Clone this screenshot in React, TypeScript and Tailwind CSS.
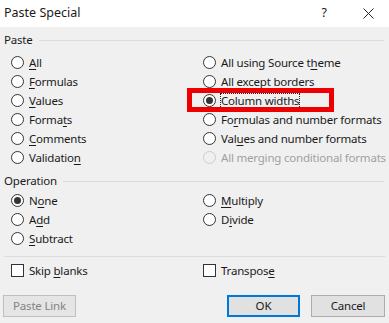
import React from "react";

const font = { fontFamily: '"Noto Sans", "Open Sans", sans-serif' };

function U({ t, i }: { t: string; i: number }) {
  if (i < 0) return <>{t}</>;
  return (
    <>
      {t.slice(0, i)}
      <span className="underline underline-offset-2">{t[i]}</span>
      {t.slice(i + 1)}
    </>
  );
}

function Radio({
  label,
  u,
  checked = false,
  disabled = false,
  focus = false,
}: {
  label: string;
  u: number;
  checked?: boolean;
  disabled?: boolean;
  focus?: boolean;
}) {
  return (
    <div className="flex h-[19px] items-center">
      <span
        className={`flex h-[13px] w-[13px] shrink-0 items-center justify-center rounded-full border ${
          disabled ? "border-[#cccccc] bg-[#f0f0f0]" : "border-[#333333] bg-white"
        }`}
      >
        {checked && <span className="h-[7px] w-[7px] rounded-full bg-[#333333]" />}
      </span>
      <span
        className={`ml-[5px] whitespace-nowrap text-[11.5px] leading-[14px] tracking-[-0.2px] ${
          disabled ? "text-[#a0a0a0]" : "text-[#1a1a1a]"
        } ${focus ? "outline outline-1 outline-dotted outline-[#222]" : ""}`}
      >
        <U t={label} i={u} />
      </span>
    </div>
  );
}

function Check({ label, u }: { label: string; u: number }) {
  return (
    <div className="flex h-[19px] items-center">
      <span className="h-[13px] w-[13px] shrink-0 border border-[#333333] bg-white" />
      <span className="ml-[5px] whitespace-nowrap text-[11.5px] leading-[14px] tracking-[-0.2px] text-[#1a1a1a]">
        <U t={label} i={u} />
      </span>
    </div>
  );
}

function GroupLabel({ text }: { text: string }) {
  return (
    <div className="flex h-[16px] items-center pl-[4px] pr-[5px]">
      <span className="whitespace-nowrap text-[11.5px] leading-[14px] tracking-[-0.2px] text-[#1a1a1a]">{text}</span>
      <span className="ml-[6px] h-px flex-1 bg-[#dcdcdc]" />
    </div>
  );
}

export default function App() {
  return (
    <div className="h-[323px] w-[389px] overflow-hidden bg-[#f0f0f0]" style={font}>
      <div className="flex h-[27px] items-center bg-white pl-[4px]">
        <span className="whitespace-nowrap text-[12.5px] text-[#1a1a1a]">Paste Special</span>
        <span className="ml-auto text-[12.5px] text-[#1a1a1a]">?</span>
        <span className="ml-[34px] mr-[14px] flex h-[14px] w-[14px] items-center justify-center">
          <svg width="11" height="11" viewBox="0 0 11 11">
            <path d="M0.5 0.5 L10.5 10.5 M10.5 0.5 L0.5 10.5" stroke="#222" strokeWidth="1" />
          </svg>
        </span>
      </div>

      <div className="pt-[5px]">
        <GroupLabel text="Paste" />
        <div className="relative mt-[5px] grid grid-cols-[192px_1fr] pl-[11px]">
          <div className="flex flex-col">
            <Radio label="All" u={0} />
            <Radio label="Formulas" u={0} />
            <Radio label="Values" u={0} />
            <Radio label="Formats" u={5} />
            <Radio label="Comments" u={0} />
            <Radio label="Validation" u={9} />
          </div>
          <div className="flex flex-col">
            <Radio label="All using Source theme" u={18} />
            <Radio label="All except borders" u={5} />
            <Radio label="Column widths" u={7} checked focus />
            <Radio label="Formulas and number formats" u={2} />
            <Radio label="Values and number formats" u={3} />
            <Radio label="All merging conditional formats" u={-1} disabled />
          </div>
          <div className="pointer-events-none absolute left-[187px] top-[35px] h-[24px] w-[147px] border-[5px] border-[#ee0000]" />
        </div>
      </div>

      <div className="mt-[6px]">
        <GroupLabel text="Operation" />
        <div className="mt-[2px] grid grid-cols-[192px_1fr] pl-[11px]">
          <div className="flex flex-col">
            <Radio label="None" u={1} checked />
            <Radio label="Add" u={1} />
            <Radio label="Subtract" u={0} />
          </div>
          <div className="flex flex-col">
            <Radio label="Multiply" u={0} />
            <Radio label="Divide" u={1} />
          </div>
        </div>
      </div>

      <div className="mx-[4px] mt-[8px] h-px bg-[#dcdcdc]" />

      <div className="mt-[4px] grid grid-cols-[192px_1fr] pl-[11px]">
        <Check label="Skip blanks" u={5} />
        <Check label="Transpose" u={8} />
      </div>

      <div className="mt-[15px] flex items-center pl-[3px]">
        <button className="flex h-[22px] w-[73px] items-center justify-center border border-[#bfbfbf] bg-[#e5e5e5] text-[11.5px] tracking-[-0.2px] text-[#838383]">
          Paste Link
        </button>
        <button className="ml-[151px] flex h-[22px] w-[73px] items-center justify-center border-2 border-[#0078d7] bg-[#e1e1e1] text-[11.5px] text-[#1a1a1a]">
          OK
        </button>
        <button className="ml-[11px] flex h-[22px] w-[74px] items-center justify-center border border-[#adadad] bg-[#e1e1e1] text-[11.5px] tracking-[-0.2px] text-[#1a1a1a]">
          Cancel
        </button>
      </div>
    </div>
  );
}
